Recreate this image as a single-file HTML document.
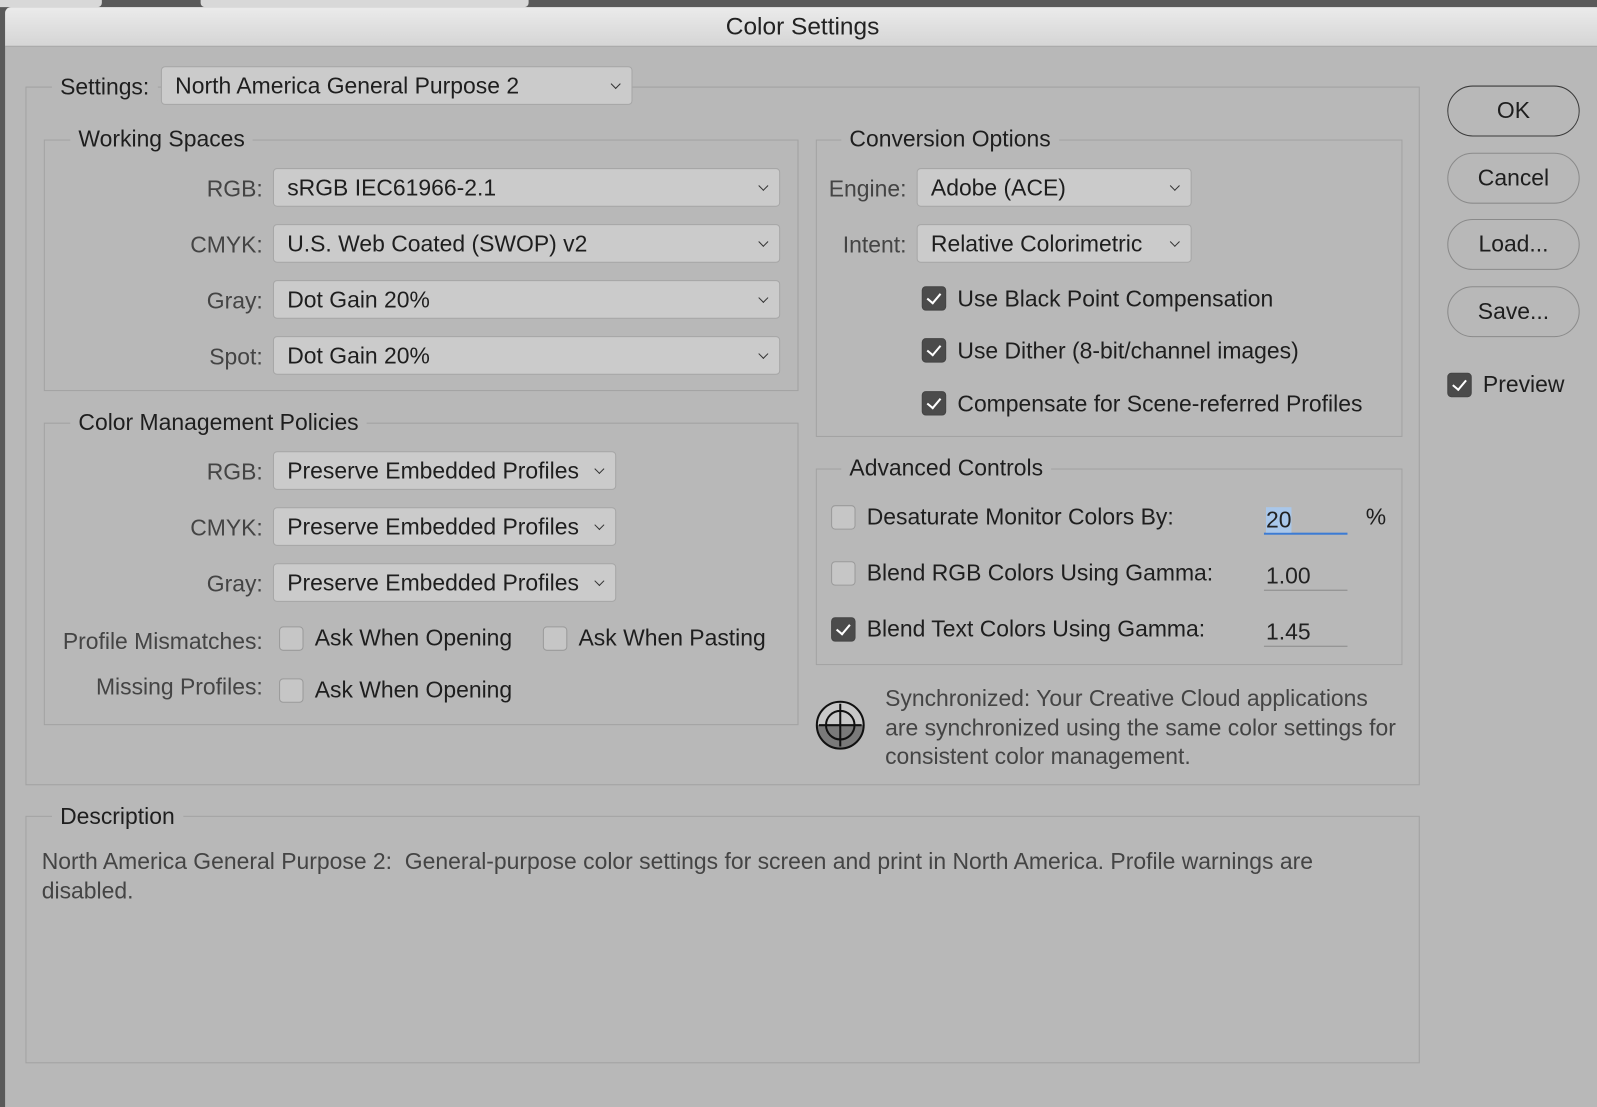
<!DOCTYPE html>
<html><head><meta charset="utf-8"><style>
*{box-sizing:border-box;margin:0;padding:0}
body{width:1597px;height:1080px;overflow:hidden;background:#5a5a5a;font-family:"Liberation Sans",sans-serif;font-size:22.5px;color:#222;position:relative}
#w{position:absolute;left:0;top:0;width:1568px;height:1061px;transform:scale(1.0185);transform-origin:0 0}
.a{position:absolute;white-space:nowrap}
.dlg{position:absolute;left:5px;top:7px;width:1600px;height:1080px;background:#b8b8b8;border-radius:6px 6px 0 0;overflow:hidden}
.tb{position:absolute;left:0;top:0;right:0;height:39px;background:linear-gradient(#ebebeb,#d5d5d5);border-bottom:1px solid #a9a9a9}
.grp{position:absolute;border:1px solid #a2a2a2}
.lg{position:absolute;background:#b8b8b8;padding:0 8px;line-height:26px;color:#1e1e1e}
.pop{position:absolute;height:38px;background:#cbcbcb;border:1px solid #a6a6a6;border-radius:4px;line-height:37px;padding-left:13px;color:#1e1e1e}
.pop:after{content:"";position:absolute;right:12px;top:13px;width:6px;height:6px;border-right:1.5px solid #333;border-bottom:1.5px solid #333;transform:rotate(45deg)}
.lbl{position:absolute;text-align:right;color:#444;line-height:26px}
.cb{position:absolute;width:24px;height:24px;border:1px solid #9a9a9a;border-radius:4px;background:#c6c6c6}
.cb.on{background:#4b4b4b;border-color:#444}
.cb.on:after{content:"";position:absolute;left:7px;top:3px;width:6px;height:11px;border-right:2.5px solid #fff;border-bottom:2.5px solid #fff;transform:rotate(40deg)}
.t{position:absolute;line-height:26px;white-space:nowrap;color:#1e1e1e}
.btn{position:absolute;left:1416px;width:130px;height:50px;border:1px solid #8a8a8a;border-radius:25px;text-align:center;line-height:48px;color:#1e1e1e}
.inp{position:absolute;width:82px;height:28px;border-bottom:1px solid #8a8a8a;line-height:27px;padding-left:2px}
</style></head><body><div id="w">
<div class="a" style="left:0;top:0;width:100px;height:7px;background:#d8d8d8;border-radius:0 0 4px 0"></div>
<div class="a" style="left:197px;top:0;width:322px;height:7px;background:#d8d8d8;border-radius:0 0 4px 4px"></div>
<div class="dlg">
<div class="tb"></div>
<div class="a" style="left:0;top:6px;width:1566px;text-align:center;font-size:24px;line-height:28px;color:#222">Color Settings</div>

<div class="grp" style="left:20px;top:78px;width:1369px;height:686px"></div>
<div class="lg" style="left:46px;top:66px">Settings:</div>
<div class="pop" style="left:153px;top:58px;width:463px">North America General Purpose 2</div>

<div class="grp" style="left:38px;top:130px;width:741px;height:247px"></div>
<div class="lg" style="left:64px;top:117px">Working Spaces</div>
<div class="lbl" style="left:120px;width:133px;top:166px">RGB:</div>
<div class="pop" style="left:263px;top:158px;width:498px">sRGB IEC61966-2.1</div>
<div class="lbl" style="left:120px;width:133px;top:221px">CMYK:</div>
<div class="pop" style="left:263px;top:213px;width:498px">U.S. Web Coated (SWOP) v2</div>
<div class="lbl" style="left:120px;width:133px;top:276px">Gray:</div>
<div class="pop" style="left:263px;top:268px;width:498px">Dot Gain 20%</div>
<div class="lbl" style="left:120px;width:133px;top:331px">Spot:</div>
<div class="pop" style="left:263px;top:323px;width:498px">Dot Gain 20%</div>

<div class="grp" style="left:38px;top:408px;width:741px;height:297px"></div>
<div class="lg" style="left:64px;top:395px">Color Management Policies</div>
<div class="lbl" style="left:120px;width:133px;top:444px">RGB:</div>
<div class="pop" style="left:263px;top:436px;width:337px">Preserve Embedded Profiles</div>
<div class="lbl" style="left:120px;width:133px;top:499px">CMYK:</div>
<div class="pop" style="left:263px;top:491px;width:337px">Preserve Embedded Profiles</div>
<div class="lbl" style="left:120px;width:133px;top:554px">Gray:</div>
<div class="pop" style="left:263px;top:546px;width:337px">Preserve Embedded Profiles</div>
<div class="lbl" style="left:0;width:253px;top:610px">Profile Mismatches:</div>
<div class="cb" style="left:269px;top:608px"></div>
<div class="t" style="left:304px;top:607px">Ask When Opening</div>
<div class="cb" style="left:528px;top:608px"></div>
<div class="t" style="left:563px;top:607px">Ask When Pasting</div>
<div class="lbl" style="left:0;width:253px;top:655px">Missing Profiles:</div>
<div class="cb" style="left:269px;top:659px"></div>
<div class="t" style="left:304px;top:658px">Ask When Opening</div>

<div class="grp" style="left:796px;top:130px;width:576px;height:292px"></div>
<div class="lg" style="left:821px;top:117px">Conversion Options</div>
<div class="lbl" style="left:790px;width:95px;top:166px">Engine:</div>
<div class="pop" style="left:895px;top:158px;width:270px">Adobe (ACE)</div>
<div class="lbl" style="left:790px;width:95px;top:221px">Intent:</div>
<div class="pop" style="left:895px;top:213px;width:270px">Relative Colorimetric</div>
<div class="cb on" style="left:900px;top:274px"></div>
<div class="t" style="left:935px;top:274px">Use Black Point Compensation</div>
<div class="cb on" style="left:900px;top:325px"></div>
<div class="t" style="left:935px;top:325px">Use Dither (8-bit/channel images)</div>
<div class="cb on" style="left:900px;top:377px"></div>
<div class="t" style="left:935px;top:377px">Compensate for Scene-referred Profiles</div>

<div class="grp" style="left:796px;top:453px;width:576px;height:193px"></div>
<div class="lg" style="left:821px;top:440px">Advanced Controls</div>
<div class="cb" style="left:811px;top:489px"></div>
<div class="t" style="left:846px;top:488px">Desaturate Monitor Colors By:</div>
<div class="inp" style="left:1236px;top:490px;border-bottom:2px solid #3b7bd4"><span style="background:#a9c7ea">20</span></div>
<div class="t" style="left:1336px;top:488px">%</div>
<div class="cb" style="left:811px;top:544px"></div>
<div class="t" style="left:846px;top:543px">Blend RGB Colors Using Gamma:</div>
<div class="inp" style="left:1236px;top:545px">1.00</div>
<div class="cb on" style="left:811px;top:599px"></div>
<div class="t" style="left:846px;top:598px">Blend Text Colors Using Gamma:</div>
<div class="inp" style="left:1236px;top:600px">1.45</div>

<svg class="a" style="left:795px;top:680px" width="50" height="50" viewBox="0 0 50 50">
<circle cx="25" cy="25" r="23" fill="#c8c8c8"/>
<path d="M25 25 L48 25 A23 23 0 0 1 2 25 Z" fill="#7a7a7a"/>
<circle cx="25" cy="25" r="23" fill="none" stroke="#111" stroke-width="2"/>
<circle cx="25" cy="25" r="14" fill="none" stroke="#111" stroke-width="2"/>
<path d="M25 4V46M4 25H46" stroke="#111" stroke-width="2"/>
</svg>
<div class="t" style="left:864px;top:665px;line-height:28.5px;color:#444">Synchronized: Your Creative Cloud applications<br>are synchronized using the same color settings for<br>consistent color management.</div>

<div class="grp" style="left:20px;top:794px;width:1369px;height:243px"></div>
<div class="lg" style="left:46px;top:782px">Description</div>
<div class="t" style="left:36px;top:825px;line-height:28.5px;color:#444">North America General Purpose 2:&nbsp; General-purpose color settings for screen and print in North America. Profile warnings are<br>disabled.</div>

<div class="btn" style="top:77px;border-color:#3a3a3a">OK</div>
<div class="btn" style="top:143px">Cancel</div>
<div class="btn" style="top:208px">Load...</div>
<div class="btn" style="top:274px">Save...</div>
<div class="cb on" style="left:1416px;top:359px"></div>
<div class="t" style="left:1451px;top:358px">Preview</div>
</div>
</div></body></html>
